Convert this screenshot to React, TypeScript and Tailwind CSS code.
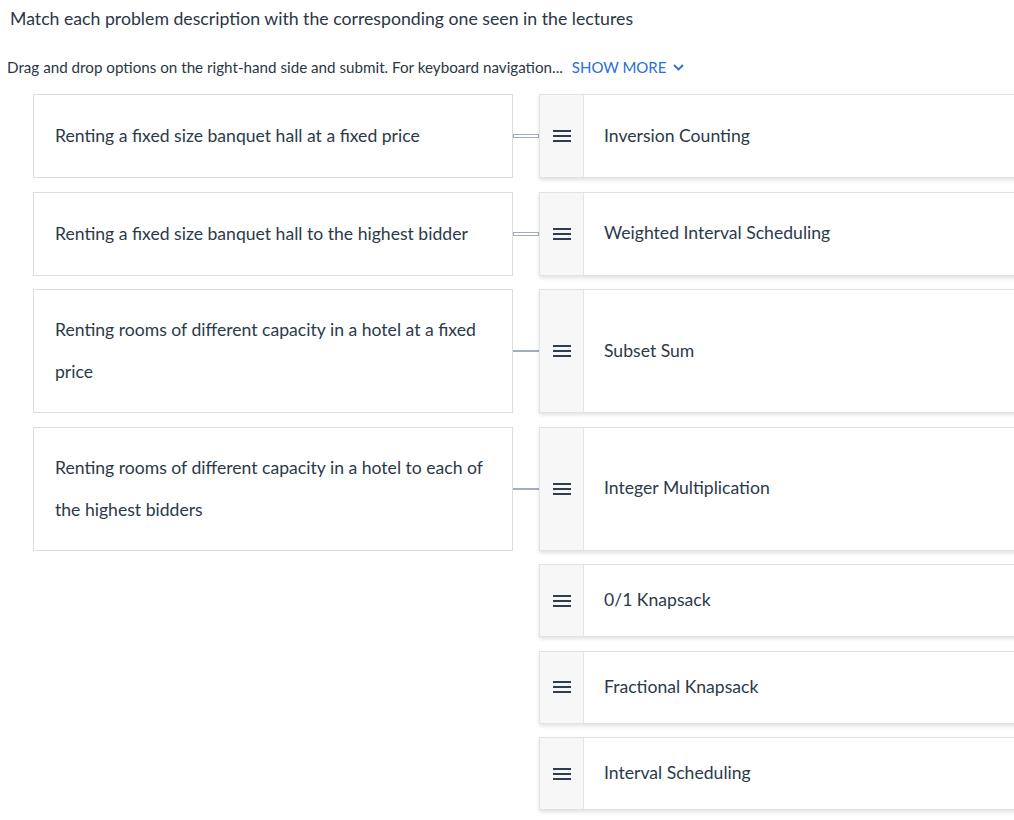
import React from 'react';

const font = { fontFamily: 'Lato, "Noto Sans", sans-serif' };

interface Row {
  left?: string;
  right: string;
  tall?: boolean;
  link?: 'double' | 'single';
}

const rows: Row[] = [
  { left: 'Renting a fixed size banquet hall at a fixed price', right: 'Inversion Counting', link: 'double' },
  { left: 'Renting a fixed size banquet hall to the highest bidder', right: 'Weighted Interval Scheduling', link: 'double' },
  { left: 'Renting rooms of different capacity in a hotel at a fixed price', right: 'Subset Sum', tall: true, link: 'single' },
  { left: 'Renting rooms of different capacity in a hotel to each of the highest bidders', right: 'Integer Multiplication', tall: true, link: 'single' },
  { right: '0/1 Knapsack' },
  { right: 'Fractional Knapsack' },
  { right: 'Interval Scheduling' },
];

function Handle() {
  return (
    <div className="w-[44px] shrink-0 bg-[#f7f7f8] border-r border-[#e3e5e8] flex items-center justify-center">
      <svg width="18" height="14" viewBox="0 0 18 14">
        <rect x="0" y="1" width="18" height="2" fill="#2d3e50" />
        <rect x="0" y="6" width="18" height="2" fill="#2d3e50" />
        <rect x="0" y="11" width="18" height="2" fill="#2d3e50" />
      </svg>
    </div>
  );
}

function Connector({ kind }: { kind?: 'double' | 'single' }) {
  if (kind === 'double') {
    return <div className="w-[26px] shrink-0 h-[4px] border border-[#a3aeb9] bg-white" />;
  }
  if (kind === 'single') {
    return <div className="w-[26px] shrink-0 h-[2px] bg-[#a3aeb9]" />;
  }
  return <div className="w-[26px] shrink-0" />;
}

export default function App() {
  return (
    <div className="w-[1014px] h-[820px] overflow-hidden bg-white text-[#2b3a4a]" style={font}>
      <div className="pl-[10px] pt-[8px] text-[17.7px] leading-[22px] text-[#2b3646]">
        Match each problem description with the corresponding one seen in the lectures
      </div>
      <div className="pl-[7px] mt-[27px] text-[15.2px] leading-[20px] text-[#2b3646] flex items-center">
        <span>Drag and drop options on the right-hand side and submit. For keyboard navigation...</span>
        <button className="ml-[9px] text-[#2a6ed6] flex items-center gap-[7px] text-[15px]">
          SHOW MORE
          <svg width="11" height="7" viewBox="0 0 11 7" fill="none">
            <path d="M1 1l4.5 4.5L10 1" stroke="#2a6ed6" strokeWidth="1.8" />
          </svg>
        </button>
      </div>
      <div className="mt-[17px] flex flex-col gap-[13.5px]">
        {rows.map((r, i) => {
          const h = r.link ? (r.tall ? 'h-[124px]' : 'h-[84px]') : 'h-[73px]';
          return (
            <div key={i} className="flex items-center">
              {r.left ? (
                <div
                  className={`ml-[33px] w-[480px] shrink-0 flex items-center border border-[#dadde1] px-[21px] text-[17.6px] leading-[42px] ${h}`}
                >
                  <span>{r.left}</span>
                </div>
              ) : (
                <div className="ml-[33px] w-[480px] shrink-0" />
              )}
              <Connector kind={r.link} />
              <div
                className={`w-[480px] shrink-0 flex bg-white border border-[#dfe2e6] shadow-[0_2px_4px_rgba(0,0,0,0.12)] ${h}`}
              >
                <Handle />
                <div className="flex items-center pl-[20px] text-[17.6px]">{r.right}</div>
              </div>
            </div>
          );
        })}
      </div>
    </div>
  );
}
